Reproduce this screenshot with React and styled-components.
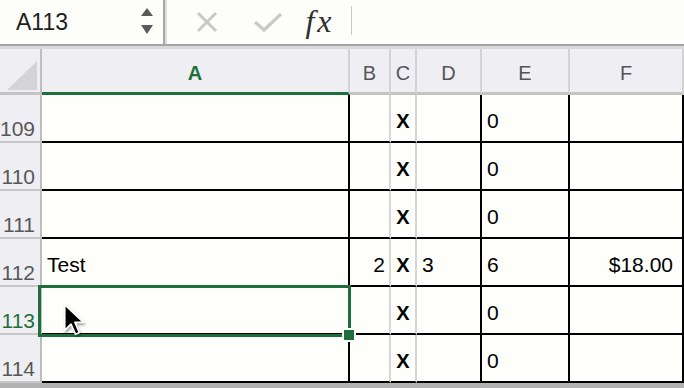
import React from 'react';
import styled, { createGlobalStyle, css } from 'styled-components';

const GlobalStyle = createGlobalStyle`
  html, body {
    margin: 0;
    padding: 0;
    background: #b3b3b3;
  }
  body {
    font-family: 'Liberation Sans', Arial, sans-serif;
  }
`;

const GREEN = '#1f6f3d';

// columns of the sheet, width includes the right border
const columns = [
  { key: 'a', label: 'A', width: 308, line: 'black', align: 'left' },
  { key: 'b', label: 'B', width: 41, line: 'gray', align: 'right' },
  { key: 'c', label: 'C', width: 26, line: 'gray', align: 'center', bold: true },
  { key: 'd', label: 'D', width: 65, line: 'black', align: 'left' },
  { key: 'e', label: 'E', width: 88, line: 'black', align: 'left' },
  { key: 'f', label: 'F', width: 114, line: 'black', align: 'right', padRight: 9 },
];

const rows = [
  { n: 109, a: '', b: '', c: 'X', d: '', e: '0', f: '' },
  { n: 110, a: '', b: '', c: 'X', d: '', e: '0', f: '' },
  { n: 111, a: '', b: '', c: 'X', d: '', e: '0', f: '' },
  { n: 112, a: 'Test', b: '2', c: 'X', d: '3', e: '6', f: '$18.00' },
  { n: 113, a: '', b: '', c: 'X', d: '', e: '0', f: '', active: true },
  { n: 114, a: '', b: '', c: 'X', d: '', e: '0', f: '' },
];

const Page = styled.div`
  width: 684px;
  display: flex;
  flex-direction: column;
`;

const FormulaBar = styled.div`
  height: 44px;
  display: flex;
  align-items: stretch;
  background: #fdfdf9;
  border-bottom: 2px solid #a4a4a4;
  box-shadow: 0 3px 0 #d9d9d9;
  margin-bottom: 3px;
`;

const NameBox = styled.div`
  width: 163px;
  display: flex;
  align-items: center;
  padding-left: 16px;
  box-sizing: border-box;
  font-size: 23px;
  line-height: 26px;
  color: #1e1e1e;
`;

const Spinner = styled.svg`
  margin-left: auto;
  margin-right: 9px;
  align-self: flex-start;
  margin-top: 6px;
`;

const Divider = styled.div`
  width: 2px;
  background: #a8a8a8;
  border-right: 2px solid #dedede;
`;

const IconButton = styled.div`
  width: ${(p) => p.$w}px;
  display: flex;
  align-items: center;
  justify-content: center;
`;

const Fx = styled.span`
  font-family: 'Liberation Serif', 'Times New Roman', serif;
  font-style: italic;
  font-size: 32px;
  line-height: 32px;
  letter-spacing: 3px;
  color: #2e2e2e;
  margin-top: -2px;
`;

const ThinDivider = styled.div`
  width: 1px;
  margin: 6px 0 9px;
  background: #c9c9c9;
`;

const FormulaInput = styled.div`
  flex: 1;
`;

const SheetWrap = styled.div`
  position: relative;
`;

const Sheet = styled.div`
  display: grid;
  grid-template-columns: 42px ${columns.map((c) => `${c.width}px`).join(' ')};
  grid-auto-rows: 48px;
  grid-template-rows: 46px;
`;

const headerBg = '#efeff3';

const Corner = styled.div`
  background: ${headerBg};
  border-right: 2px solid #bdbdbd;
  border-bottom: 3px solid #c4c4c4;
  display: flex;
  align-items: flex-end;
  justify-content: flex-end;
  padding: 0 3px 2px 0;
`;

const ColHeader = styled.div`
  background: ${headerBg};
  border-right: 2px solid #d3d3d3;
  border-bottom: 3px solid ${(p) => (p.$active ? GREEN : '#c4c4c4')};
  color: ${(p) => (p.$active ? GREEN : '#555')};
  font-weight: ${(p) => (p.$active ? 'bold' : 'normal')};
  font-size: 20px;
  line-height: 24px;
  display: flex;
  align-items: flex-end;
  justify-content: center;
  padding-bottom: 7px;
  box-sizing: border-box;
`;

const RowHeader = styled.div`
  background: ${headerBg};
  border-right: 2px solid #bdbdbd;
  border-bottom: 2px solid #c8c8c8;
  color: ${(p) => (p.$active ? GREEN : '#575757')};
  font-size: 21px;
  line-height: 24px;
  display: flex;
  align-items: flex-end;
  justify-content: flex-end;
  padding-right: 5px;
  box-sizing: border-box;
`;

const Cell = styled.div`
  background: #fefefb;
  border-bottom: 2px solid #000;
  border-right: 2px solid ${(p) => (p.$line === 'black' ? '#000' : '#d6d6d6')};
  color: #000;
  font-size: 21px;
  line-height: 24px;
  display: flex;
  align-items: flex-end;
  padding: 0 ${(p) => p.$padRight ?? 4}px 8px 5px;
  box-sizing: border-box;
  white-space: nowrap;
  ${(p) =>
    p.$align === 'right' &&
    css`
      justify-content: flex-end;
    `}
  ${(p) =>
    p.$align === 'center' &&
    css`
      justify-content: center;
      padding-left: 0;
      padding-right: 0;
    `}
  ${(p) =>
    p.$bold &&
    css`
      font-weight: bold;
      font-size: 20px;
    `}
`;

const Selection = styled.div`
  position: absolute;
  left: 38px;
  top: 236px;
  width: 313px;
  height: 52px;
  box-sizing: border-box;
  border: 3px solid ${GREEN};
  pointer-events: none;
`;

const FillHandle = styled.div`
  position: absolute;
  left: 344px;
  top: 281px;
  width: 10px;
  height: 10px;
  background: ${GREEN};
  box-shadow: 0 0 0 2px #fefefb;
`;

const Cursor = styled.svg`
  position: absolute;
  left: 63px;
  top: 254px;
  filter: drop-shadow(1px 2px 1px rgba(0, 0, 0, 0.35));
`;

export default function App() {
  return (
    <>
      <GlobalStyle />
      <Page>
        <FormulaBar>
          <NameBox>
            A113
            <Spinner width="14" height="32" viewBox="0 0 14 32">
              <polygon points="1,10 7,2 13,10" fill="#5a5a5a" />
              <polygon points="1,19 13,19 7,28" fill="#5a5a5a" />
            </Spinner>
          </NameBox>
          <Divider />
          <IconButton $w={80}>
            <svg width="22" height="22" viewBox="0 0 22 22">
              <path d="M2 2 L20 20 M20 2 L2 20" stroke="#c9c9c9" strokeWidth="3" />
            </svg>
          </IconButton>
          <IconButton $w={42}>
            <svg width="30" height="22" viewBox="0 0 30 22">
              <path d="M2 11 L11 19 L28 3" stroke="#c9c9c9" strokeWidth="3.2" fill="none" />
            </svg>
          </IconButton>
          <IconButton $w={62}>
            <Fx>fx</Fx>
          </IconButton>
          <ThinDivider />
          <FormulaInput />
        </FormulaBar>

        <SheetWrap>
          <Sheet>
            <Corner>
              <svg width="30" height="29" viewBox="0 0 30 29">
                <polygon points="30,0 30,29 0,29" fill="#d4d4d8" />
              </svg>
            </Corner>
            {columns.map((c) => (
              <ColHeader key={c.key} $active={c.key === 'a'}>
                {c.label}
              </ColHeader>
            ))}
            {rows.map((r) => (
              <React.Fragment key={r.n}>
                <RowHeader $active={r.active}>{r.n}</RowHeader>
                {columns.map((c) => (
                  <Cell
                    key={c.key}
                    $line={c.line}
                    $align={c.align}
                    $bold={c.bold}
                    $padRight={c.padRight}
                  >
                    {r[c.key]}
                  </Cell>
                ))}
              </React.Fragment>
            ))}
          </Sheet>
          <Selection />
          <FillHandle />
          <Cursor width="25" height="33" viewBox="0 0 22 29">
            <path
              d="M1.5 1.5 L1.5 24 L7 18.5 L11 27.5 L14.5 26 L10.5 17 L18 17 Z"
              fill="#000"
              stroke="#fff"
              strokeWidth="1.5"
              strokeLinejoin="round"
            />
          </Cursor>
        </SheetWrap>
      </Page>
    </>
  );
}
